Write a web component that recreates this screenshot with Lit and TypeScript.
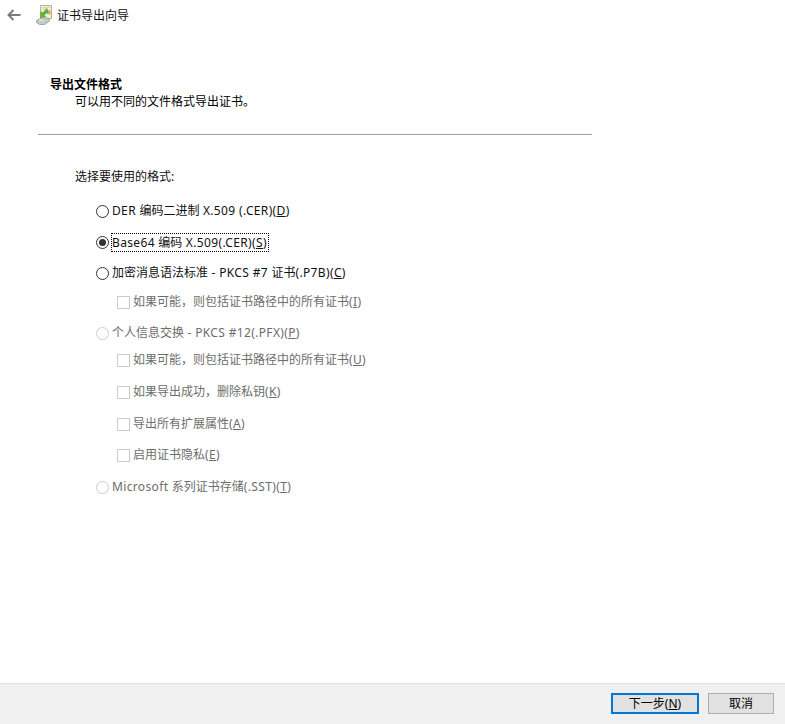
import { LitElement, html, css } from "lit";
import { customElement } from "lit/decorators.js";

interface Opt { kind: string; off?: boolean; text: string; key: string; top: number; focus?: boolean; }

const OPTS: Opt[] = [
  { kind: "radio", text: "DER 编码二进制 X.509 (.CER)", key: "D", top: 0 },
  { kind: "radio on", text: "Base64 编码 X.509(.CER)", key: "S", top: 15, focus: true },
  { kind: "radio", text: "加密消息语法标准 - PKCS #7 证书(.P7B)", key: "C", top: 15 },
  { kind: "check", off: true, text: "如果可能，则包括证书路径中的所有证书", key: "I", top: 13 },
  { kind: "radio", off: true, text: "个人信息交换 - PKCS #12(.PFX)", key: "P", top: 15 },
  { kind: "check", off: true, text: "如果可能，则包括证书路径中的所有证书", key: "U", top: 11 },
  { kind: "check", off: true, text: "如果导出成功，删除私钥", key: "K", top: 16 },
  { kind: "check", off: true, text: "导出所有扩展属性", key: "A", top: 16 },
  { kind: "check", off: true, text: "启用证书隐私", key: "E", top: 15 },
  { kind: "radio", off: true, text: "Microsoft 系列证书存储(.SST)", key: "T", top: 16 },
];

@customElement("app-root")
export class AppRoot extends LitElement {
  static styles = css`
    :host {
      display: flex;
      flex-direction: column;
      width: 785px;
      height: 724px;
      background: #fff;
      color: #111;
      font-family: "Noto Sans", "Noto Sans CJK SC", sans-serif;
      font-size: 12px;
      line-height: 16px;
      overflow: hidden;
    }
    .title {
      display: flex;
      align-items: center;
      height: 30px;
      padding-left: 7px;
      flex: none;
    }
    .back { width: 14px; height: 12px; margin-right: 15px; display: block; }
    .cert { width: 16px; height: 20px; margin-right: 5px; display: block; }
    .title-text { padding-top: 2px; }
    .main { flex: 1; }
    .head { padding: 47px 0 0 50px; box-sizing: border-box; height: 104px; }
    .h1 { font-weight: 700; color: #000; }
    .sub { padding: 1px 0 0 25px; color: #000; }
    .rule { width: 554px; height: 1px; background: #a0a0a0; margin-left: 38px; }
    .body { padding: 34px 0 0 75px; }
    .prompt { height: 16px; margin-bottom: 18px; }
    .opts { padding-left: 21px; display: flex; flex-direction: column; }
    .row { display: flex; align-items: center; height: 16px; white-space: pre; }
    .radio {
      width: 13px; height: 13px; box-sizing: border-box; border: 1px solid #333;
      border-radius: 50%; background: #fff; flex: none; margin-right: 3px;
      display: flex; align-items: center; justify-content: center;
    }
    .radio.on::after { content: ""; width: 7px; height: 7px; border-radius: 50%; background: #333; }
    .check {
      width: 13px; height: 13px; box-sizing: border-box; border: 1px solid #ccc;
      background: #fff; flex: none; margin-right: 3px; margin-left: 21px;
    }
    .off { color: #6d6d6d; }
    .off .radio { border-color: #ccc; }
    .focus { outline: 1px dotted #000; padding: 1px 1px 0 0; }
    .lat { letter-spacing: 0.35px; }
    u { text-underline-offset: 1px; }
    .foot {
      flex: none; height: 40px; background: #f0f0f0; border-top: 1px solid #dfdfdf;
      display: flex; align-items: center; justify-content: flex-end;
      padding-right: 11px; gap: 9px;
    }
    .btn {
      box-sizing: border-box; height: 21px; background: #e1e1e1; border: 1px solid #adadad;
      display: flex; align-items: center; justify-content: center; color: #000;
      font: inherit; padding: 0; margin-bottom: 1px;
    }
    .btn.next { width: 88px; border: 2px solid #0078d7; }
    .btn.cancel { width: 66px; }
  `;

  private lat(text: string) {
    return text.split(/([\x00-\x7f]+)/).map((part, i) =>
      i % 2 ? html`<span class="lat">${part}</span>` : part
    );
  }

  private label(o: Opt) {
    const content = html`${this.lat(o.text)}<span class="lat">(<u>${o.key}</u>)</span>`;
    return o.focus ? html`<span class="focus">${content}</span>` : content;
  }

  render() {
    return html`
      <div class="title">
        <svg class="back" viewBox="0 0 14 12"><path d="M6.500 1 1.500 6l5 5M1.500 6H13.500" fill="none" stroke="#7b7b7b" stroke-width="2"/></svg>
        <svg class="cert" viewBox="0 0 16 20">
          <path d="M4.500 .5h11v13h-11z" fill="#f3efdf" stroke="#b9b295"/>
          <path d="M6 2.500h8M6 4h5" stroke="#d8d2b8"/>
          <path d="M10.500 5.500h2v3h-2z" fill="#3f7fd0"/>
          <path d="M12.500 5.500h2v4.500l-1-1-1 1z" fill="#e3a52f"/>
          <path d="M.5 15.500l5-2.500h6l2 1.500v1.500l-5 3.500H3.500l-3-2z" fill="#c6cac6" stroke="#8a8e8a" stroke-width=".7"/>
          <path d="M3 15h5" stroke="#eef0ee"/>
          <path d="M11 3 6.500 7.500 4.500 6 4 13l6.500-1-2-1.800L12.500 6z" fill="#62b52e"/>
        </svg>
        <span class="title-text">证书导出向导</span>
      </div>
      <div class="main">
        <div class="head">
          <div class="h1">导出文件格式</div>
          <div class="sub">可以用不同的文件格式导出证书。</div>
        </div>
        <div class="rule"></div>
        <div class="body">
          <div class="prompt">选择要使用的格式:</div>
          <div class="opts">
            ${OPTS.map(o => html`<div class="row ${o.off ? "off" : ""}" style="margin-top:${o.top}px"><span class=${o.kind}></span>${this.label(o)}</div>`)}
          </div>
        </div>
      </div>
      <div class="foot">
        <button class="btn next">下一步(<u>N</u>)</button>
        <button class="btn cancel">取消</button>
      </div>
    `;
  }
}
